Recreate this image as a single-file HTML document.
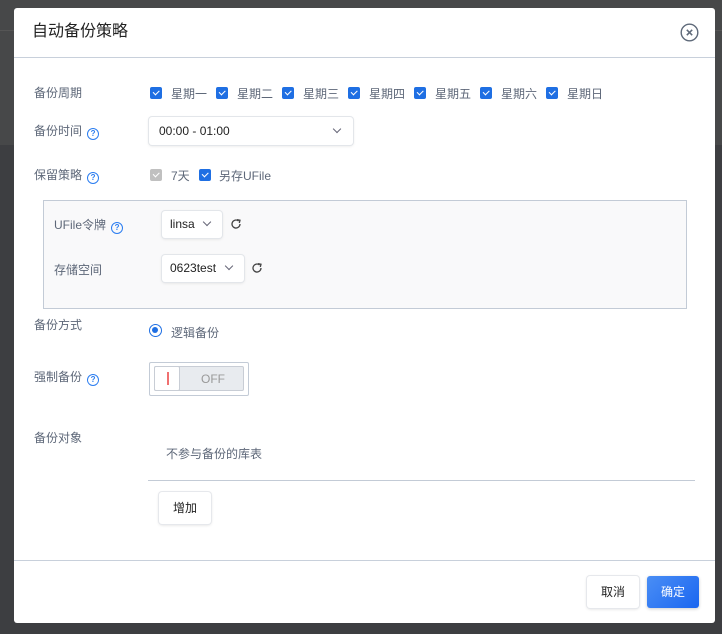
<!DOCTYPE html>
<html><head><meta charset="utf-8"><style>
*{box-sizing:border-box;margin:0;padding:0}
body{width:722px;height:634px;background:#3d3e41;font-family:"Liberation Sans","Noto Sans CJK SC",sans-serif;position:relative;overflow:hidden;font-size:12px}
.bgtop{position:absolute;left:0;top:0;width:722px;height:145px;background:#474849}
.bgline{position:absolute;left:0;top:30px;width:722px;height:1px;background:#555}
.modal{position:absolute;left:14px;top:8px;width:701px;height:615px;background:#fff;border-radius:3px}
.title{position:absolute;left:18px;top:13px;font-size:16px;color:#222;line-height:22px}
.close{position:absolute;left:666px;top:15px}
.hl{position:absolute;left:0;width:701px;height:1px;background:#c8d0db}
.lbl{position:absolute;left:20px;color:#5d6778;font-size:12px}
.q{display:inline-block;width:12px;height:12px;border:1.3px solid #2b7df0;border-radius:50%;color:#2b7df0;font-size:8px;line-height:10px;text-align:center;font-weight:bold;margin-left:5px;vertical-align:-1px}
.cb{position:absolute;width:12px;height:12px;background:#1f6fe3;border-radius:2px}
.cb:after{content:"";position:absolute;left:3px;top:3px;width:5px;height:2.5px;border-left:1.3px solid #fff;border-bottom:1.3px solid #fff;transform:rotate(-45deg)}
.cb.g{background:#c0c0c0}
.t{position:absolute;color:#5d6778;font-size:12px}
.sel{position:absolute;background:#fff;border-radius:3px;box-shadow:0 0 0 1px #e3e6ea,0 1px 3px rgba(0,0,0,.12);font-size:12px;color:#222}
.chev{position:absolute;width:6px;height:6px;border-right:1.2px solid #667;border-bottom:1.2px solid #667;transform:rotate(45deg)}
.btn{position:absolute;background:#fff;border-radius:3px;box-shadow:0 0 0 1px #e6e8ec,0 1px 3px rgba(0,0,0,.15);font-size:12px;color:#222;text-align:center}
</style></head><body>
<div class="bgtop"></div><div class="bgline"></div>
<div class="modal">
<div class="title">自动备份策略</div>
<svg class="close" width="19" height="19" viewBox="0 0 19 19"><circle cx="9.5" cy="9.5" r="8.3" fill="none" stroke="#5f6a7a" stroke-width="1.4"/><path d="M6.8 6.8L12.2 12.2M12.2 6.8L6.8 12.2" stroke="#5f6a7a" stroke-width="1.5"/></svg>
<div class="hl" style="top:49px"></div>

<div class="lbl" style="top:76px">备份周期</div>
<div class="cb" style="left:136px;top:79px"></div><div class="t" style="left:157px;top:77px">星期一</div>
<div class="cb" style="left:202px;top:79px"></div><div class="t" style="left:223px;top:77px">星期二</div>
<div class="cb" style="left:268px;top:79px"></div><div class="t" style="left:289px;top:77px">星期三</div>
<div class="cb" style="left:334px;top:79px"></div><div class="t" style="left:355px;top:77px">星期四</div>
<div class="cb" style="left:400px;top:79px"></div><div class="t" style="left:421px;top:77px">星期五</div>
<div class="cb" style="left:466px;top:79px"></div><div class="t" style="left:487px;top:77px">星期六</div>
<div class="cb" style="left:532px;top:79px"></div><div class="t" style="left:553px;top:77px">星期日</div>

<div class="lbl" style="top:114px">备份时间<span class="q">?</span></div>
<div class="sel" style="left:135px;top:109px;width:204px;height:28px"><span style="position:absolute;left:10px;top:7px">00:00 - 01:00</span><div class="chev" style="left:185px;top:9px"></div></div>

<div class="lbl" style="top:158px">保留策略<span class="q">?</span></div>
<div class="cb g" style="left:136px;top:161px"></div><div class="t" style="left:157px;top:159px">7天</div>
<div class="cb" style="left:185px;top:161px"></div><div class="t" style="left:205px;top:159px">另存UFile</div>

<div style="position:absolute;left:29px;top:192px;width:644px;height:109px;background:#f9f9fa;border:1px solid #c3cbd6"></div>
<div class="lbl" style="left:40px;top:208px">UFile令牌<span class="q">?</span></div>
<div class="sel" style="left:148px;top:203px;width:60px;height:27px"><span style="position:absolute;left:8px;top:6px">linsa</span><div class="chev" style="left:42px;top:8px"></div></div>
<svg style="position:absolute;left:216px;top:210px" width="12" height="12" viewBox="0 0 12 12"><path d="M10 6A4 4 0 1 1 8.6 3" fill="none" stroke="#444" stroke-width="1.3"/><path d="M7 1.6L10 2.2L9.3 5" fill="none" stroke="#444" stroke-width="1.3"/></svg>
<div class="lbl" style="left:40px;top:253px">存储空间</div>
<div class="sel" style="left:148px;top:247px;width:82px;height:27px"><span style="position:absolute;left:8px;top:6px">0623test</span><div class="chev" style="left:64px;top:8px"></div></div>
<svg style="position:absolute;left:237px;top:254px" width="12" height="12" viewBox="0 0 12 12"><path d="M10 6A4 4 0 1 1 8.6 3" fill="none" stroke="#444" stroke-width="1.3"/><path d="M7 1.6L10 2.2L9.3 5" fill="none" stroke="#444" stroke-width="1.3"/></svg>

<div class="lbl" style="top:308px">备份方式</div>
<div style="position:absolute;left:135px;top:316px;width:13px;height:13px;border:1.5px solid #1f6fe3;border-radius:50%"><div style="position:absolute;left:2px;top:2px;width:6px;height:6px;background:#1f6fe3;border-radius:50%"></div></div>
<div class="t" style="left:157px;top:316px">逻辑备份</div>

<div class="lbl" style="top:360px">强制备份<span class="q">?</span></div>
<div style="position:absolute;left:135px;top:354px;width:100px;height:34px;border:1px solid #c3cbd6;border-radius:2px"></div>
<div style="position:absolute;left:140px;top:358px;width:90px;height:25px;background:#e8ebef;border:1px solid #c8cdd5;border-radius:2px"><span style="position:absolute;left:46px;top:5px;color:#999;font-size:12px">OFF</span></div>
<div style="position:absolute;left:140px;top:358px;width:26px;height:25px;background:#fff;border:1px solid #c8cdd5;border-radius:2px"><div style="position:absolute;left:12px;top:5px;width:1.5px;height:13px;background:#f07070"></div></div>

<div class="lbl" style="top:421px">备份对象</div>
<div class="t" style="left:152px;top:437px">不参与备份的库表</div>
<div style="position:absolute;left:134px;top:472px;width:547px;height:1px;background:#c3cbd6"></div>
<div class="btn" style="left:145px;top:484px;width:52px;height:32px;line-height:32px">增加</div>

<div class="hl" style="top:552px"></div>
<div class="btn" style="left:573px;top:568px;width:52px;height:32px;line-height:32px">取消</div>
<div class="btn" style="left:633px;top:568px;width:52px;height:32px;line-height:32px;background:linear-gradient(135deg,#4a8ef5,#1a66f0);color:#fff;box-shadow:0 1px 3px rgba(0,0,0,.2)">确定</div>
</div>
</body></html>
